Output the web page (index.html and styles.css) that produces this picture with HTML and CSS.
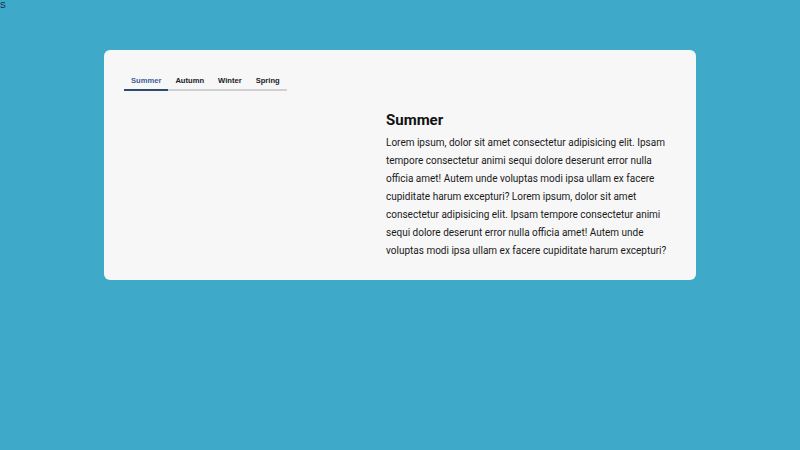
FILE: index.html
```html
<!DOCTYPE html>
<html lang="en">
<head>
<meta charset="utf-8">
<title>Seasons</title>
<link rel="stylesheet" href="styles.css">
</head>
<body>
<div class="skip">S</div>
<main class="stage">
  <section class="card">
    <nav class="tabs">
      <button class="tab active">Summer</button>
      <button class="tab">Autumn</button>
      <button class="tab">Winter</button>
      <button class="tab">Spring</button>
    </nav>
    <div class="panel">
      <div class="media"></div>
      <div class="content">
        <h2 class="title">Summer</h2>
        <p class="text">Lorem ipsum, dolor sit amet consectetur adipisicing elit. Ipsam tempore consectetur animi sequi dolore deserunt error nulla officia amet! Autem unde voluptas modi ipsa ullam ex facere cupiditate harum excepturi? Lorem ipsum, dolor sit amet consectetur adipisicing elit. Ipsam tempore consectetur animi sequi dolore deserunt error nulla officia amet! Autem unde voluptas modi ipsa ullam ex facere cupiditate harum excepturi?</p>
      </div>
    </div>
  </section>
</main>
</body>
</html>
```
FILE: styles.css
```css
html, body {
  margin: 0;
  padding: 0;
  height: 100%;
}
body {
  background: #3ea9c9;
  font-family: Roboto, "Liberation Sans", Arial, sans-serif;
}
.skip {
  font-family: "Liberation Sans", Arial, sans-serif;
  font-size: 8.5px;
  line-height: 11px;
  color: #0f2540;
  height: 11px;
}
.stage {
  display: flex;
  justify-content: center;
  padding-top: 39px;
}
.card {
  width: 552px;
  padding: 20px;
  background: #f7f7f7;
  border-radius: 6px;
  display: flex;
  flex-direction: column;
}
.tabs {
  display: flex;
  align-self: flex-start;
  border-bottom: 2px solid #d0d0d2;
}
.tab {
  font-family: "Liberation Sans", Arial, sans-serif;
  font-weight: bold;
  font-size: 7.6px;
  line-height: 9px;
  color: #1b1b1f;
  background: none;
  border: none;
  padding: 6px 7px 4px;
  margin: 0 0 -2px;
  border-bottom: 2px solid transparent;
  cursor: pointer;
}
.tab.active {
  color: #3d5f96;
  border-bottom-color: #2e4b6d;
}
.panel {
  display: grid;
  grid-template-columns: 262px 1fr;
  margin-top: 20.4px;
}
.title {
  margin: 0 0 4.9px;
  font-size: 15px;
  font-weight: bold;
  line-height: normal;
  color: #111;
}
.text {
  margin: 0;
  font-size: 10px;
  line-height: 18px;
  color: #1a1a1a;
}
```
